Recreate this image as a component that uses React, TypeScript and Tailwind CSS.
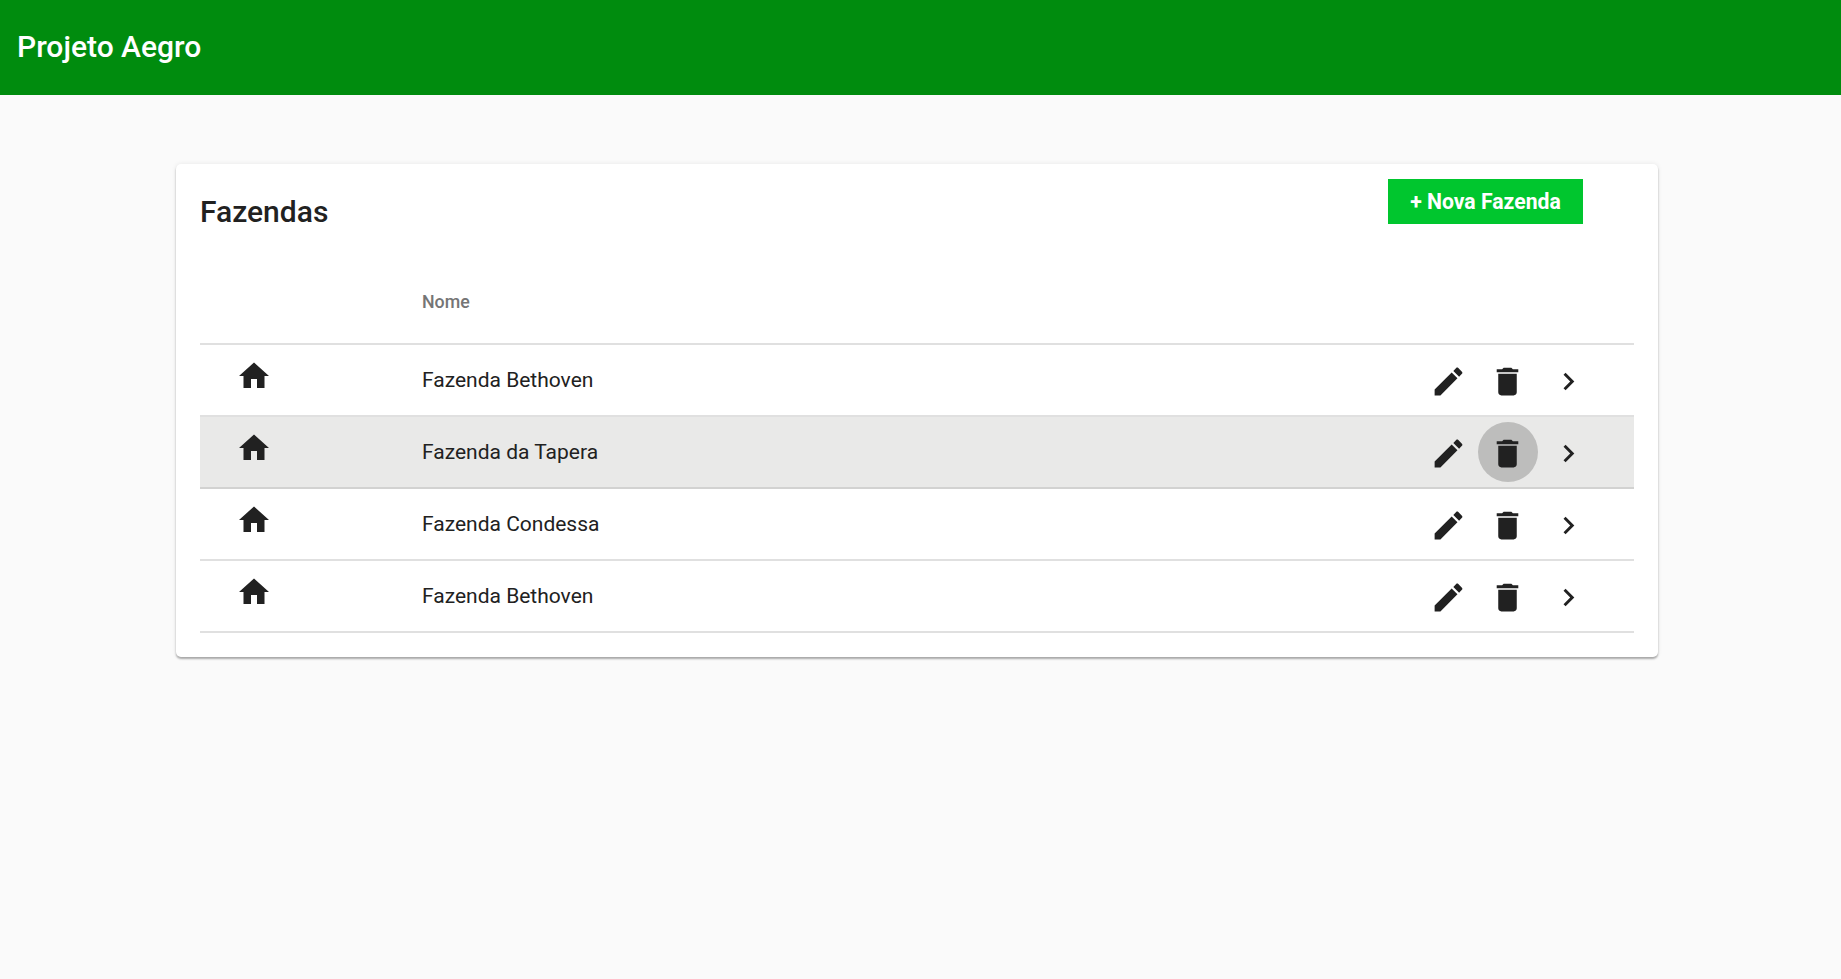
import React from "react";

const fazendas = ["Fazenda Bethoven", "Fazenda da Tapera", "Fazenda Condessa", "Fazenda Bethoven"];

const Icon = ({ d, className }: { d: string; className: string }) => (
  <svg viewBox="0 0 24 24" fill="currentColor" className={className}>
    <path d={d} />
  </svg>
);

const HOME = "M10 20v-6h4v6h5v-8h3L12 3 2 12h3v8z";
const EDIT =
  "M3 17.25V21h3.75L17.81 9.94l-3.75-3.75L3 17.25zM20.71 7.04c.39-.39.39-1.02 0-1.41l-2.34-2.34c-.39-.39-1.02-.39-1.41 0l-1.83 1.83 3.75 3.75 1.83-1.83z";
const TRASH = "M6 19c0 1.1.9 2 2 2h8c1.1 0 2-.9 2-2V7H6v12zM19 4h-3.5l-1-1h-5l-1 1H5v2h14V4z";
const NEXT = "M10 6L8.59 7.41 13.17 12l-4.58 4.59L10 18l6-6z";

const Row = ({ nome, hover }: { nome: string; hover?: boolean }) => (
  <div className={`flex h-[72px] items-center border-b-2 ${hover ? "bg-[#e9e9e8] border-[#d2d2d1]" : "border-[#e0e0e0]"}`}>
    <div className="w-[222px] self-start pl-[36px] pt-[13px]">
      <Icon d={HOME} className="h-[36px] w-[36px]" />
    </div>
    <div className="flex-1 pt-[2px] text-[21px]">{nome}</div>
    <div className="mr-[36px] flex">
      <button className="flex h-[60px] w-[60px] items-center justify-center">
        <Icon d={EDIT} className="mt-[2px] h-[37px] w-[37px]" />
      </button>
      <button className={`flex h-[60px] w-[60px] items-center justify-center rounded-full ${hover ? "bg-[#bdbdbc]" : ""}`}>
        <Icon d={TRASH} className="mr-px mt-[2px] h-[37px] w-[37px]" />
      </button>
      <button className="flex h-[60px] w-[60px] items-center justify-center">
        <Icon d={NEXT} className="mt-[2px] h-[35px] w-[35px]" />
      </button>
    </div>
  </div>
);

export default function App() {
  return (
    <div className="min-h-[979px] bg-[#fafafa] font-['Roboto',sans-serif] text-[#212121]">
      <header className="flex h-[95px] items-center bg-[#008c0e] px-[17px] pb-[2px]">
        <h1 className="text-[30px] font-medium text-white">Projeto Aegro</h1>
      </header>

      <main className="pl-[176px] pr-[183px] pt-[69px]">
        <div className="rounded-[5px] bg-white px-6 pb-6 shadow-[0_2px_2px_rgba(0,0,0,0.3),0_0_5px_rgba(0,0,0,0.08)]">
          <div className="flex items-start justify-between pr-[51px] pt-[15px]">
            <h2 className="pt-[14px] text-[30px] leading-[38px] font-medium">Fazendas</h2>
            <button className="flex h-[45px] w-[195px] items-center justify-center bg-[#00c62e] pt-[1px] text-[21.2px] font-bold text-white">
              + Nova Fazenda
            </button>
          </div>
          <div className="mt-[44px] flex h-[70px] items-center border-b-2 border-[#e0e0e0] pb-[14px] pl-[222px] text-[17.8px] font-medium text-[#757575]">
            Nome
          </div>
          {fazendas.map((nome, i) => (
            <Row key={i} nome={nome} hover={i === 1} />
          ))}
        </div>
      </main>
    </div>
  );
}
